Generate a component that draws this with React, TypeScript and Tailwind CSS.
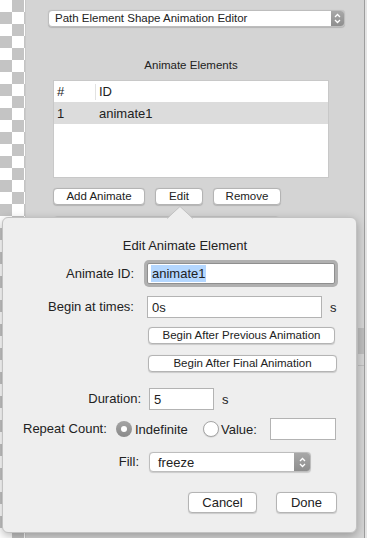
import React from 'react'

function Stepper({ className = '' }: { className?: string }) {
  return (
    <div className={`flex items-center justify-center bg-gradient-to-b from-[#a8a8a8] to-[#8e8e8e] ${className}`}>
      <svg width="7" height="11" viewBox="0 0 7 11" fill="none" stroke="#fff" strokeWidth="1.3">
        <path d="M1 4 L3.5 1.5 L6 4" />
        <path d="M1 7 L3.5 9.5 L6 7" />
      </svg>
    </div>
  )
}

function SmallButton({ label, width, className = '' }: { label: string; width: string; className?: string }) {
  return (
    <div
      className={`${width} h-[17px] flex items-center justify-center rounded-[4px] bg-white border border-[#b4b4b4] shadow-[0_0.5px_1px_rgba(0,0,0,0.15)] text-[11.5px] text-[#222] leading-none ${className}`}
    >
      {label}
    </div>
  )
}

function Radio({ checked }: { checked?: boolean }) {
  return checked ? (
    <div className="w-[16px] h-[16px] rounded-full bg-gradient-to-b from-[#a4a4a4] to-[#8a8a8a] flex items-center justify-center">
      <div className="w-[6px] h-[6px] rounded-full bg-white" />
    </div>
  ) : (
    <div className="w-[16px] h-[16px] rounded-full bg-white border border-[#a6a6a6] shadow-[0_0.5px_1px_rgba(0,0,0,0.15)]" />
  )
}

export default function App() {
  return (
    <div className="relative w-[367px] h-[538px] overflow-hidden flex bg-[#d4d4d4] font-['Liberation_Sans',Arial,sans-serif] text-[#222]">
      {/* transparent canvas strip */}
      <div className="w-[26px] h-full shrink-0 bg-[conic-gradient(#c4c4c4_25%,#fff_0_50%,#c4c4c4_0_75%,#fff_0)] bg-[length:24px_24px] border-r border-[#c9c9c9]" />

      {/* inspector panel */}
      <div className="flex-1 flex flex-col pt-[10px]">
        <div className="ml-[22px] w-[297px] h-[17px] flex rounded-[4px] bg-white border border-[#bdbdbd] shadow-[0_0.5px_1px_rgba(0,0,0,0.15)] overflow-hidden">
          <div className="flex-1 flex items-center pl-[6px] text-[11.5px] leading-none">Path Element Shape Animation Editor</div>
          <Stepper className="w-[13px] h-full" />
        </div>

        <div className="ml-[27px] w-[276px] mt-[31px] h-[14px] text-center text-[11.5px] leading-[14px]">Animate Elements</div>

        <div className="ml-[27px] w-[276px] mt-[8px] h-[98px] bg-white border border-[#c8c8c8] flex flex-col text-[13px]">
          <div className="h-[21px] flex items-center">
            <div className="w-[41px] pl-[3px] leading-none">#</div>
            <div className="w-px h-[16px] bg-[#e2e2e2]" />
            <div className="pl-[3px] leading-none">ID</div>
          </div>
          <div className="h-[22px] flex items-center bg-[#dcdcdc]">
            <div className="w-[42px] pl-[3px] leading-none">1</div>
            <div className="pl-[3px] leading-none">animate1</div>
          </div>
        </div>

        <div className="ml-[27px] mt-[10px] flex gap-[10px]">
          <SmallButton label="Add Animate" width="w-[92px]" />
          <SmallButton label="Edit" width="w-[48px]" />
          <SmallButton label="Remove" width="w-[68px]" />
        </div>

        <div className="ml-[27px] mt-[11px] w-[227px] h-[20px] rounded-[4px] bg-[#e6e6e6] border border-[#c4c4c4]" />

        <div className="mt-[92px] self-end w-[6px] h-[26px] bg-[#bcbcbc]" />
        <div className="mt-[11px] self-end w-[6px] h-px bg-[#bdbdbd]" />
      </div>

      <div className="w-[3px] h-full shrink-0 bg-[#e4e4e4] border-l border-[#9d9d9d]" />

      {/* edit popover */}
      <div className="absolute left-[2px] top-[217px] w-[355px] h-[316px] rounded-[6px] bg-[#eeeeee] border border-[#c2c2c2] shadow-[0_3px_10px_rgba(0,0,0,0.28)] flex flex-col text-[13px]">
        <svg className="absolute left-[164px] top-[-12px]" width="26" height="13" viewBox="0 0 26 13">
          <path d="M0 13 L13 0.5 L26 13 Z" fill="#eeeeee" />
          <path d="M0 12.5 L13 0.5 L26 12.5" fill="none" stroke="#c2c2c2" strokeWidth="1" />
        </svg>

        <div className="mt-[20px] h-[16px] leading-[16px] text-center pl-[11px]">Edit Animate Element</div>

        <div className="mt-[6px] h-[27px] flex items-center">
          <div className="w-[131px] text-right leading-[16px]">Animate ID:</div>
          <div className="ml-[13px] w-[188px] h-[21px] flex items-center bg-white border border-[#8f8f8f] rounded-[2px] shadow-[0_0_0_3px_#b0b0b0] pl-[3px]">
            <span className="bg-[#b4d7ff] leading-[17px] px-px">animate1</span>
          </div>
        </div>

        <div className="mt-[9px] h-[22px] flex items-center">
          <div className="w-[131px] text-right leading-[16px]">Begin at times:</div>
          <div className="ml-[13px] w-[175px] h-[22px] flex items-center bg-white border border-[#b3b3b3] pl-[4px] leading-none">0s</div>
          <div className="ml-[8px] leading-none">s</div>
        </div>

        <SmallButton label="Begin After Previous Animation" width="w-[187px]" className="mt-[9px] ml-[145px]" />
        <SmallButton label="Begin After Final Animation" width="w-[189px]" className="mt-[11px] ml-[145px]" />

        <div className="mt-[16px] h-[22px] flex items-center">
          <div className="w-[138px] text-right leading-[16px]">Duration:</div>
          <div className="ml-[8px] w-[65px] h-[22px] flex items-center bg-white border border-[#b3b3b3] pl-[4px] leading-none">5</div>
          <div className="ml-[8px] leading-none">s</div>
        </div>

        <div className="mt-[8px] h-[22px] flex items-center pl-[20px]">
          <div className="w-[87px] leading-[16px]">Repeat Count:</div>
          <div className="ml-[6px]"><Radio checked /></div>
          <div className="ml-[3px] w-[56px] leading-none">Indefinite</div>
          <div className="ml-[12px]"><Radio /></div>
          <div className="ml-[2px] w-[39px] leading-none">Value:</div>
          <div className="ml-[10px] w-[66px] h-[22px] bg-white border border-[#b3b3b3]" />
        </div>

        <div className="mt-[12px] h-[20px] flex items-center">
          <div className="w-[136px] text-right leading-[16px]">Fill:</div>
          <div className="ml-[10px] w-[162px] h-[20px] flex rounded-[4px] bg-white border border-[#bdbdbd] shadow-[0_0.5px_1px_rgba(0,0,0,0.15)] overflow-hidden">
            <div className="flex-1 flex items-center pl-[8px] leading-none">freeze</div>
            <Stepper className="w-[16px] h-full" />
          </div>
        </div>

        <div className="mt-[20px] flex justify-end pr-[19px] gap-[19px]">
          <div className="w-[69px] h-[21px] flex items-center justify-center rounded-[4px] bg-white border border-[#b4b4b4] shadow-[0_0.5px_1px_rgba(0,0,0,0.15)] leading-none">Cancel</div>
          <div className="w-[61px] h-[21px] flex items-center justify-center rounded-[4px] bg-white border border-[#b4b4b4] shadow-[0_0.5px_1px_rgba(0,0,0,0.15)] leading-none">Done</div>
        </div>
      </div>
    </div>
  )
}
